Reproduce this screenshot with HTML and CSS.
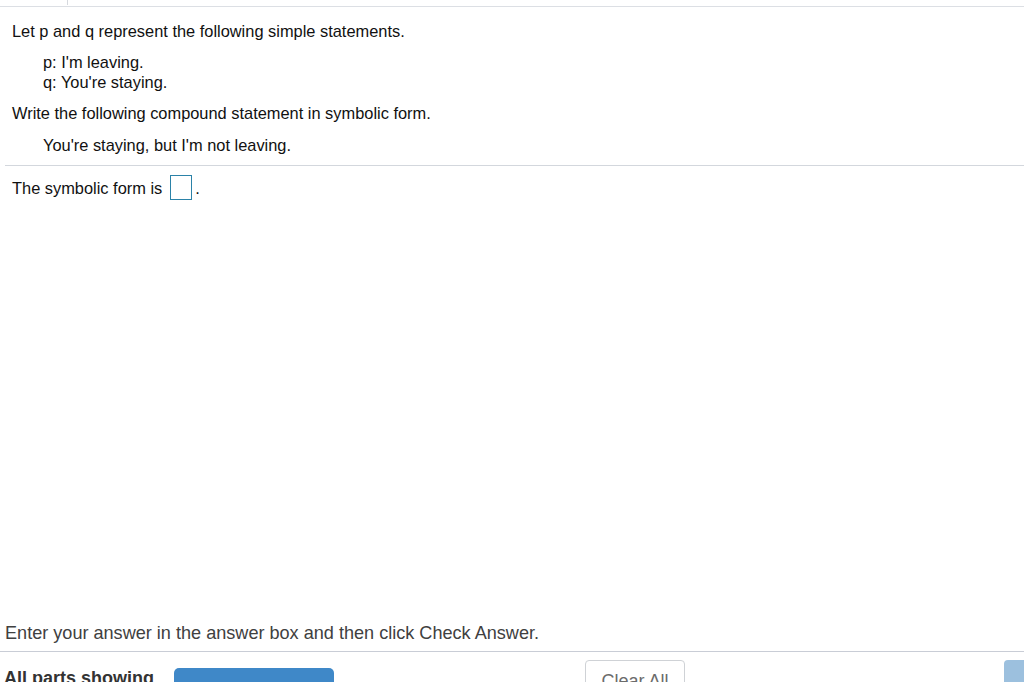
FILE: index.html
```html
<!DOCTYPE html>
<html lang="en">

<head>
    <meta charset="UTF-8">
    <meta name="viewport" content="width=device-width, initial-scale=1.0">
    <title>Question</title>
    <link rel="stylesheet" href="styles.css">
</head>

<body>
    <div class="page">
        <div class="tabs">
            <span class="tab-divider"></span>
        </div>

        <div class="question">
            <p class="intro">Let p and q represent the following simple statements.</p>
            <div class="statements">
                <div>p: I'm leaving.</div>
                <div>q: You're staying.</div>
            </div>
            <p class="instruction">Write the following compound statement in symbolic form.</p>
            <p class="compound">You're staying, but I'm not leaving.</p>
        </div>

        <div class="answer">
            The symbolic form is <span class="answer-box"></span>.
        </div>

        <div class="spacer"></div>

        <div class="footer">
            <p class="hint">Enter your answer in the answer box and then click Check Answer.</p>
            <div class="footer-row">
                <span class="parts">All parts showing</span>
                <button class="btn-primary"></button>
                <button class="btn-clear">Clear All</button>
                <button class="btn-check"></button>
            </div>
        </div>
    </div>
</body>

</html>
```

FILE: styles.css
```css
* {
    margin: 0;
    padding: 0;
    box-sizing: border-box;
}

body {
    font-family: "Liberation Sans", Arial, sans-serif;
    color: #111;
    background: #fff;
    overflow: hidden;
}

.page {
    display: flex;
    flex-direction: column;
    height: 100vh;
}

/* tab strip at the very top */
.tabs {
    height: 7px;
    border-bottom: 1px solid #dcdfe4;
    position: relative;
}

.tab-divider {
    position: absolute;
    left: 67px;
    top: 0;
    width: 1px;
    height: 5px;
    background: #d6d9de;
}

.question {
    padding: 14px 0 10px 7px;
    margin-left: 5px;
    font-size: 16.4px;
    line-height: 20px;
    border-bottom: 1px solid #d3d7dd;
}

.statements {
    margin: 11px 0 11px 31px;
}

.compound {
    margin: 12px 0 0 31px;
}

.answer {
    font-size: 16.4px;
    line-height: 20px;
    padding: 9px 0 0 12px;
    display: flex;
    align-items: center;
}

.answer-box {
    display: inline-block;
    width: 22px;
    height: 25px;
    border: 1px solid #2b82a8;
    margin: 0 3px 0 8px;
}

.spacer {
    flex: 1;
}

.footer {
    height: 59px;
}

.hint {
    font-size: 18.1px;
    line-height: 20px;
    color: #404040;
    padding-left: 5px;
    padding-bottom: 8px;
    border-bottom: 1px solid #c9cdd6;
}

.footer-row {
    display: flex;
    align-items: flex-start;
    padding-left: 4px;
    overflow: hidden;
}

.footer-row > * {
    flex-shrink: 0;
}

.parts {
    font-size: 18px;
    font-weight: bold;
    color: #333;
    margin-top: 16px;
    width: 170px;
    white-space: nowrap;
}

.btn-primary {
    width: 160px;
    height: 40px;
    margin-top: 16px;
    border: none;
    border-radius: 5px;
    background: #3f88c8;
}

.btn-clear {
    width: 100px;
    height: 40px;
    margin: 8px 0 0 251px;
    border: 1px solid #cfd2d6;
    border-radius: 4px;
    background: #fff;
    color: #6b6b6b;
    font-family: "Liberation Sans", Arial, sans-serif;
    font-size: 18px;
    padding-top: 2px;
}

.btn-check {
    width: 80px;
    height: 40px;
    margin: 8px 0 0 319px;
    border: none;
    border-radius: 4px;
    background: #9cc0de;
}
```
